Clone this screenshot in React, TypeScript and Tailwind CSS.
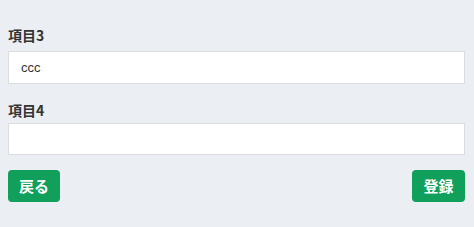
export default function App() {
  return (
    <div
      className="min-h-[227px] bg-[#ebeef2] pt-[25px] pl-2 pr-[9px] text-[#333]"
      style={{ fontFamily: '"Noto Sans CJK JP", "Liberation Sans", sans-serif' }}
    >
      <div className="mb-[16px]">
        <label className="block text-[14px] font-bold leading-[20px] mb-[6px]">項目3</label>
        <input
          className="block w-full h-[33px] border border-[#d9dde2] bg-white px-3 text-[13px] text-[#333] outline-none"
          style={{ fontFamily: '"Liberation Sans", sans-serif' }}
          defaultValue="ccc"
        />
      </div>
      <div className="mb-[15px]">
        <label className="block text-[14px] font-bold leading-[20px] mb-[3px]">項目4</label>
        <input className="block w-full h-[32px] border border-[#d9dde2] bg-white px-3 text-[13px] outline-none" />
      </div>
      <div className="flex justify-between">
        <button className="h-[32px] w-[52px] rounded-[4px] bg-[#10a05b] text-[15px] font-semibold text-white">
          戻る
        </button>
        <button className="h-[32px] w-[53px] rounded-[4px] bg-[#10a05b] text-[15px] font-semibold text-white">
          登録
        </button>
      </div>
    </div>
  );
}
